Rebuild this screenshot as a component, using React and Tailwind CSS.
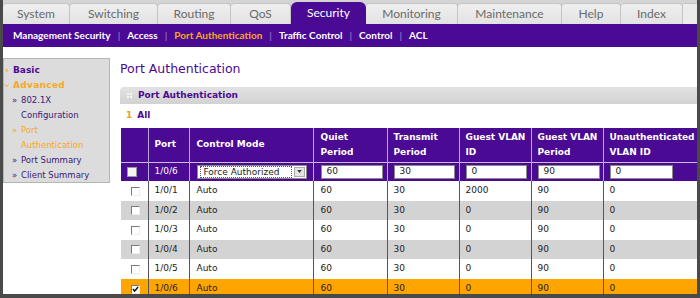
import React from 'react';

const PURPLE = '#4b0a93';

const tabs = [
  { label: 'System', w: 'w-[67px]' },
  { label: 'Switching', w: 'w-[88px]' },
  { label: 'Routing', w: 'w-[73px]' },
  { label: 'QoS', w: 'w-[60px]' },
  { label: 'Security', w: 'w-[75px]', active: true },
  { label: 'Monitoring', w: 'w-[92px]' },
  { label: 'Maintenance', w: 'w-[104px]' },
  { label: 'Help', w: 'w-[59px]' },
  { label: 'Index', w: 'w-[62px]' },
];

const subnav = [
  'Management Security',
  'Access',
  'Port Authentication',
  'Traffic Control',
  'Control',
  'ACL',
];

const rows = [
  { port: '1/0/1', guest: '2000' },
  { port: '1/0/2', guest: '0' },
  { port: '1/0/3', guest: '0' },
  { port: '1/0/4', guest: '0' },
  { port: '1/0/5', guest: '0' },
  { port: '1/0/6', guest: '0', checked: true },
];

function Caja({ checked }) {
  return (
    <span className="relative block h-[9px] w-[9px] border-t border-l border-[#7a7a7a] border-r border-b border-r-[#eee] border-b-[#eee] bg-white">
      {checked && (
        <svg viewBox="0 0 8 8" className="absolute left-0 top-0 h-[7px] w-[7px]">
          <path d="M1 3.5 L3 5.8 L7 1.2" fill="none" stroke="#111" strokeWidth="1.6" />
        </svg>
      )}
    </span>
  );
}

function Entrada({ value, w }) {
  return (
    <div className={`flex h-[14px] items-center border border-[#8a8a8a] bg-white pl-[5px] text-[9px] text-[#222] ${w}`}>
      {value}
    </div>
  );
}

export default function App() {
  return (
    <div
      className="relative h-[298px] w-[700px] overflow-hidden border-b-[4px] border-l-[3px] border-r-[3px] border-[#4a4a4a] bg-white"
      style={{ fontFamily: '"DejaVu Sans", Verdana, sans-serif' }}
    >
      {/* pestañas */}
      <div className="flex h-[24px] items-end bg-[#d4d4d4]" style={{ fontFamily: 'Lato, "Open Sans", sans-serif' }}>
        {tabs.map((t) =>
          t.active ? (
            <div
              key={t.label}
              className={`flex h-[22px] items-center justify-center rounded-t-[6px] bg-[#4b0a93] text-[12px] text-white ${t.w}`}
            >
              {t.label}
            </div>
          ) : (
            <div
              key={t.label}
              className={`flex h-[21px] items-center justify-center rounded-t-[4px] border-r border-t border-[#c4c4c4] bg-gradient-to-b from-[#efefef] to-[#e2e2e2] text-[12px] text-[#6a6a6a] ${t.w}`}
            >
              {t.label}
            </div>
          )
        )}
        <div className="h-[21px] flex-1 border-t border-[#c4c4c4] bg-[#ececec]" />
      </div>

      {/* submenú */}
      <div
        className="flex h-[23px] items-center bg-[#4b0a93] pl-[10px] text-[10px] font-bold text-white"
        style={{ fontFamily: 'Lato, "Open Sans", sans-serif' }}
      >
        {subnav.map((s, i) => (
          <React.Fragment key={s}>
            {i > 0 && <span className="mx-[7px] text-[#8e6cc4]">|</span>}
            <span className={s === 'Port Authentication' ? 'text-[#f7a823]' : ''}>{s}</span>
          </React.Fragment>
        ))}
      </div>

      <div className="flex pt-[11px]">
        {/* barra lateral */}
        <div className="h-[125px] w-[107px] shrink-0 border border-[#b5b5b5] bg-[#dcdcdc] pt-[4px] text-[8.5px] leading-[15px]">
          <div className="flex items-center text-[9px] font-bold" style={{ color: PURPLE }}>
            <span className="w-[9px] pl-[1px] text-[#f7a823]">›</span>Basic
          </div>
          <div className="flex items-center text-[9px] font-bold tracking-[0.3px] text-[#f7a823]">
            <span className="w-[9px]">
              <svg viewBox="0 0 6 6" className="h-[5px] w-[5px]">
                <path d="M0.5 1.5 L3 4.5 L5.5 1.5" fill="none" stroke="#f7a823" strokeWidth="1.2" />
              </svg>
            </span>
            Advanced
          </div>
          {[
            ['802.1X', 'Configuration'],
            ['Port', 'Authentication', true],
            ['Port Summary'],
            ['Client Summary'],
          ].map(([a, b, on]) => (
            <div key={a} className={`flex pl-[8px] ${on ? 'text-[#f7a823]' : 'text-[#3a1a78]'}`}>
              <span className="w-[9px] shrink-0">»</span>
              <div>
                <div>{a}</div>
                {typeof b === 'string' && <div>{b}</div>}
              </div>
            </div>
          ))}
        </div>

        {/* contenido */}
        <div className="ml-[10px] min-w-0 flex-1">
          <h1 className="h-[20px] text-[12.5px] leading-[22px]" style={{ color: PURPLE }}>
            Port Authentication
          </h1>
          <div className="mt-[9px] flex h-[17px] items-center rounded-tl-[4px] bg-gradient-to-b from-[#e2e2e2] to-[#d2d2d2] pl-[7px]">
            <span className="mr-[6px] grid grid-cols-2 gap-[1px]">
              <span className="h-[2px] w-[2px] bg-[#f5f5f5]" />
              <span className="h-[2px] w-[2px] bg-[#f5f5f5]" />
              <span className="h-[2px] w-[2px] bg-[#f5f5f5]" />
              <span className="h-[2px] w-[2px] bg-[#f5f5f5]" />
            </span>
            <span className="text-[9px] font-bold" style={{ color: PURPLE }}>
              Port Authentication
            </span>
          </div>
          <div className="flex h-[24px] items-center pl-[6px] text-[9px] font-bold">
            <span className="mr-[5px] text-[#f0a020]">1</span>
            <span style={{ color: PURPLE }}>All</span>
          </div>

          <div className="ml-[1px] overflow-hidden">
            <table className="w-[650px] table-fixed border-collapse text-[9px]">
              <colgroup>
                <col className="w-[27px]" />
                <col className="w-[41px]" />
                <col className="w-[124px]" />
                <col className="w-[74px]" />
                <col className="w-[72px]" />
                <col className="w-[72px]" />
                <col className="w-[72px]" />
                <col className="w-[168px]" />
              </colgroup>
              <thead>
                <tr className="h-[34px] bg-[#4b0a93] text-left align-middle font-bold leading-[15px] text-white">
                  <th className="border-r border-[#b9a6dc]" />
                  <th className="border-r border-[#b9a6dc] pl-[6px]">Port</th>
                  <th className="border-r border-[#b9a6dc] pl-[7px]">Control Mode</th>
                  <th className="border-r border-[#b9a6dc] pl-[7px]">Quiet<br />Period</th>
                  <th className="border-r border-[#b9a6dc] pl-[6px]">Transmit<br />Period</th>
                  <th className="border-r border-[#b9a6dc] pl-[6px]">Guest VLAN<br />ID</th>
                  <th className="border-r border-[#b9a6dc] pl-[6px]">Guest VLAN<br />Period</th>
                  <th className="pl-[6px]">Unauthenticated<br />VLAN ID</th>
                </tr>
              </thead>
              <tbody>
                <tr className="h-[19px] border-t border-[#c9b9e6] bg-[#4b0a93] text-white">
                  <td className="border-r border-[#b9a6dc]">
                    <span className="ml-[6px] block h-[10px] w-[10px] border border-[#999] bg-[#f4f4f4]" />
                  </td>
                  <td className="border-r border-[#b9a6dc] pl-[6px]">1/0/6</td>
                  <td className="border-r border-[#b9a6dc] pl-[7px]">
                    <div className="flex h-[14px] w-[110px] items-center border border-[#8a8a8a] bg-white text-[#222]">
                      <span className="ml-[2px] flex-1 border border-dotted border-[#555] pl-[3px] leading-[10px]">
                        Force Authorized
                      </span>
                      <span className="ml-[2px] mr-[1px] flex h-[10px] w-[11px] items-center justify-center border border-[#aaa] bg-[#e4e4e4]">
                        <svg viewBox="0 0 6 4" className="h-[3px] w-[5px]">
                          <path d="M0 0 H6 L3 4 Z" fill="#333" />
                        </svg>
                      </span>
                    </div>
                  </td>
                  <td className="border-r border-[#b9a6dc] pl-[7px]"><Entrada value="60" w="w-[62px]" /></td>
                  <td className="border-r border-[#b9a6dc] pl-[6px]"><Entrada value="30" w="w-[61px]" /></td>
                  <td className="border-r border-[#b9a6dc] pl-[6px]"><Entrada value="0" w="w-[61px]" /></td>
                  <td className="border-r border-[#b9a6dc] pl-[6px]"><Entrada value="90" w="w-[62px]" /></td>
                  <td className="pl-[6px]"><Entrada value="0" w="w-[63px]" /></td>
                </tr>
                {rows.map((r, i) => (
                  <tr
                    key={r.port}
                    className={`${i === 1 ? 'h-[19px]' : i === 3 ? 'h-[19px]' : 'h-[20px]'} text-[#222] ${
                      r.checked ? 'bg-[#ffa500]' : i % 2 === 1 ? 'bg-[#d3d3d3]' : 'bg-white'
                    }`}
                  >
                    <td className="border-r border-[#555]">
                      <span className="ml-[10px] block w-[9px]"><Caja checked={r.checked} /></span>
                    </td>
                    <td className="border-r border-[#555] pl-[6px]">{r.port}</td>
                    <td className="border-r border-[#555] pl-[7px]">Auto</td>
                    <td className="border-r border-[#555] pl-[7px]">60</td>
                    <td className="border-r border-[#555] pl-[6px]">30</td>
                    <td className="border-r border-[#555] pl-[6px]">{r.guest}</td>
                    <td className="border-r border-[#555] pl-[6px]">90</td>
                    <td className="pl-[6px]">0</td>
                  </tr>
                ))}
              </tbody>
            </table>
          </div>
        </div>
      </div>
    </div>
  );
}
